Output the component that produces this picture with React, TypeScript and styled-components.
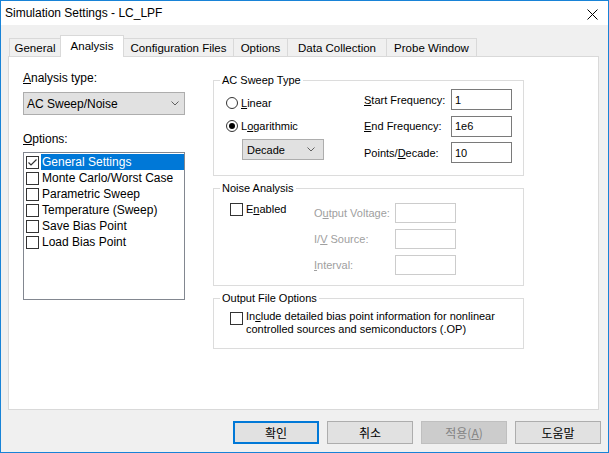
import React from "react";
import styled, { createGlobalStyle } from "styled-components";

const GlobalStyle = createGlobalStyle`
  html, body {
    margin: 0;
    padding: 0;
    background: #ffffff;
  }
  * {
    box-sizing: border-box;
  }
`;

const uiFont = `"Liberation Sans", Arial, sans-serif`;
const krFont = `"Noto Sans CJK KR", "Liberation Sans", sans-serif`;

const tabs = [
  { label: "General", width: 52 },
  { label: "Analysis", width: 64, active: true },
  { label: "Configuration Files", width: 111 },
  { label: "Options", width: 55 },
  { label: "Data Collection", width: 100 },
  { label: "Probe Window", width: 91 },
];

const optionItems = [
  { label: "General Settings", checked: true, selected: true },
  { label: "Monte Carlo/Worst Case" },
  { label: "Parametric Sweep" },
  { label: "Temperature (Sweep)" },
  { label: "Save Bias Point" },
  { label: "Load Bias Point" },
];

const Chevron = () => (
  <svg width="8" height="5" viewBox="0 0 8 5">
    <polyline points="0.5,0.5 4,4 7.5,0.5" fill="none" stroke="#606060" strokeWidth="1" />
  </svg>
);

const CheckBox: React.FC<{ checked?: boolean }> = ({ checked }) => (
  <Box>
    {checked && (
      <svg width="11" height="11" viewBox="0 0 11 11">
        <polyline points="1.5,5.5 4,8 9.5,2.5" fill="none" stroke="#333" strokeWidth="1.2" />
      </svg>
    )}
  </Box>
);

export default function App() {
  return (
    <>
      <GlobalStyle />
      <Window>
        <TitleBar>
          <Title>Simulation Settings - LC_LPF</Title>
          <CloseButton>
            <svg width="11" height="11" viewBox="0 0 11 11">
              <path d="M0.5 0.5 L10.5 10.5 M10.5 0.5 L0.5 10.5" stroke="#000" strokeWidth="1" />
            </svg>
          </CloseButton>
        </TitleBar>

        <Body>
          <TabRow>
            {tabs.map((t) => (
              <Tab key={t.label} $width={t.width} $active={!!t.active}>
                {t.label}
              </Tab>
            ))}
          </TabRow>

          <Panel>
            <LeftCol>
              <FieldLabel>
                <u>A</u>nalysis type:
              </FieldLabel>
              <Select $width={162} $height={23} $size={12}>
                <span>AC Sweep/Noise</span>
                <Chevron />
              </Select>

              <FieldLabel style={{ marginTop: 17 }}>
                <u>O</u>ptions:
              </FieldLabel>
              <ListBox>
                {optionItems.map((item) => (
                  <ListRow key={item.label}>
                    <CheckBox checked={item.checked} />
                    <ListText $selected={!!item.selected}>{item.label}</ListText>
                  </ListRow>
                ))}
              </ListBox>
            </LeftCol>

            <RightCol>
              <GroupBox $height={102}>
                <Legend>AC Sweep Type</Legend>
                <SweepContent>
                  <SweepModes>
                    <RadioRow>
                      <Radio />
                      <span>
                        <u>L</u>inear
                      </span>
                    </RadioRow>
                    <RadioRow>
                      <Radio $checked />
                      <span>
                        L<u>o</u>garithmic
                      </span>
                    </RadioRow>
                    <Select $width={82} $height={21} $size={11} $indent={16}>
                      <span>Decade</span>
                      <Chevron />
                    </Select>
                  </SweepModes>
                  <FormGrid $label={87} $rowGap={5.5}>
                    <GridLabel>
                      <u>S</u>tart Frequency:
                    </GridLabel>
                    <TextInput $height={21}>1</TextInput>
                    <GridLabel>
                      <u>E</u>nd Frequency:
                    </GridLabel>
                    <TextInput $height={21}>1e6</TextInput>
                    <GridLabel>
                      Points/<u>D</u>ecade:
                    </GridLabel>
                    <TextInput $height={21}>10</TextInput>
                  </FormGrid>
                </SweepContent>
              </GroupBox>

              <GroupBox $height={104}>
                <Legend>Noise Analysis</Legend>
                <NoiseContent>
                  <EnabledRow>
                    <CheckBox />
                    <span>
                      E<u>n</u>abled
                    </span>
                  </EnabledRow>
                  <FormGrid $label={81} $rowGap={6}>
                    <GridLabel $disabled>
                      O<u>u</u>tput Voltage:
                    </GridLabel>
                    <TextInput $height={20} $disabled />
                    <GridLabel $disabled>
                      I/<u>V</u> Source:
                    </GridLabel>
                    <TextInput $height={20} $disabled />
                    <GridLabel $disabled>
                      <u>I</u>nterval:
                    </GridLabel>
                    <TextInput $height={20} $disabled />
                  </FormGrid>
                </NoiseContent>
              </GroupBox>

              <GroupBox $height={57}>
                <Legend>Output File Options</Legend>
                <OutputContent>
                  <CheckBox />
                  <OutputText>
                    In<u>c</u>lude detailed bias point information for nonlinear
                    <br />
                    controlled sources and semiconductors (.OP)
                  </OutputText>
                </OutputContent>
              </GroupBox>
            </RightCol>
          </Panel>

          <ButtonRow>
            <Button $variant="default">확인</Button>
            <Button>취소</Button>
            <Button $variant="disabled">
              적용(<u>A</u>)
            </Button>
            <Button>도움말</Button>
          </ButtonRow>
        </Body>
      </Window>
    </>
  );
}

const Window = styled.div`
  width: 609px;
  height: 453px;
  border: 1px solid #1883d7;
  background: #f0f0f0;
  display: flex;
  flex-direction: column;
  font-family: ${uiFont};
  color: #000;
`;

const TitleBar = styled.div`
  height: 24px;
  flex-shrink: 0;
  background: #ffffff;
  display: flex;
  align-items: center;
  justify-content: space-between;
  padding-left: 4px;
`;

const Title = styled.span`
  font-size: 12px;
  line-height: 15px;
`;

const CloseButton = styled.div`
  width: 32px;
  height: 24px;
  display: flex;
  justify-content: center;
  align-items: flex-start;
  padding-top: 8px;
`;

const Body = styled.div`
  flex: 1;
  display: flex;
  flex-direction: column;
  padding: 10px 9px 0 7px;
`;

const TabRow = styled.div`
  display: flex;
  align-items: flex-end;
  padding-left: 1px;
  margin-bottom: -1px;
  position: relative;
  z-index: 1;
`;

const Tab = styled.div<{ $width: number; $active: boolean }>`
  width: ${(p) => p.$width}px;
  height: ${(p) => (p.$active ? 22 : 18)}px;
  margin-bottom: ${(p) => (p.$active ? 0 : 1)}px;
  margin-left: -1px;
  padding-bottom: ${(p) => (p.$active ? 2 : 0)}px;
  border: 1px solid #d9d9d9;
  border-bottom: none;
  background: ${(p) => (p.$active ? "#ffffff" : "#f0f0f0")};
  display: flex;
  align-items: center;
  justify-content: center;
  font-size: 11.5px;
  white-space: nowrap;

  &:first-child {
    margin-left: 0;
  }
`;

const Panel = styled.div`
  height: 354px;
  border: 1px solid #d9d9d9;
  background: #ffffff;
  display: flex;
  align-items: flex-start;
  gap: 28px;
  padding: 14px 0 0 14px;
`;

const LeftCol = styled.div`
  width: 162px;
  display: flex;
  flex-direction: column;
`;

const FieldLabel = styled.div`
  font-size: 12px;
  line-height: 15px;
`;

const Select = styled.div<{ $width: number; $height: number; $size: number; $indent?: number }>`
  width: ${(p) => p.$width}px;
  height: ${(p) => p.$height}px;
  margin-top: ${(p) => (p.$indent ? 0 : 6)}px;
  margin-left: ${(p) => p.$indent ?? 0}px;
  border: 1px solid #adadad;
  background: #e1e1e1;
  display: flex;
  align-items: center;
  justify-content: space-between;
  padding: 0 ${(p) => (p.$size > 11 ? 5 : 8)}px 0 ${(p) => (p.$size > 11 ? 3 : 4)}px;
  font-size: ${(p) => p.$size}px;
`;

const ListBox = styled.div`
  margin-top: 5px;
  height: 148px;
  border: 1px solid #828790;
  background: #ffffff;
  padding: 1px 0 0 2px;
`;

const ListRow = styled.div`
  height: 16px;
  display: flex;
  align-items: center;
`;

const Box = styled.div`
  width: 13px;
  height: 13px;
  flex-shrink: 0;
  border: 1px solid #333333;
  background: #ffffff;
  display: flex;
  align-items: center;
  justify-content: center;
`;

const ListText = styled.span<{ $selected: boolean }>`
  flex: 1;
  height: 16px;
  margin-left: 2px;
  padding-left: 1px;
  font-size: 12px;
  line-height: 16px;
  white-space: nowrap;
  background: ${(p) => (p.$selected ? "#0078d7" : "transparent")};
  color: ${(p) => (p.$selected ? "#ffffff" : "#000000")};
`;

const RightCol = styled.div`
  width: 311px;
  margin-top: 3px;
  display: flex;
  flex-direction: column;
  gap: 6px;
  font-size: 11px;
`;

const GroupBox = styled.fieldset<{ $height: number }>`
  margin: 0;
  padding: 0;
  min-width: 0;
  height: ${(p) => p.$height}px;
  border: 1px solid #dcdcdc;
`;

const Legend = styled.legend`
  margin-left: 6px;
  padding: 0 2px;
  font-size: 11px;
  line-height: 13px;
`;

const SweepContent = styled.div`
  display: flex;
  padding-left: 12px;
`;

const SweepModes = styled.div`
  width: 138px;
  display: flex;
  flex-direction: column;
  gap: 3px;
  padding-top: 6px;
`;

const RadioRow = styled.div`
  height: 20px;
  display: flex;
  align-items: center;
  gap: 3px;
`;

const Radio = styled.div<{ $checked?: boolean }>`
  width: 12px;
  height: 12px;
  border-radius: 50%;
  border: 1px solid #333333;
  background: #ffffff;
  display: flex;
  align-items: center;
  justify-content: center;

  &::after {
    content: "";
    width: 6px;
    height: 6px;
    border-radius: 50%;
    background: ${(p) => (p.$checked ? "#000000" : "transparent")};
  }
`;

const FormGrid = styled.div<{ $label: number; $rowGap: number }>`
  display: grid;
  grid-template-columns: ${(p) => p.$label}px 61px;
  row-gap: ${(p) => p.$rowGap}px;
  padding-top: 2px;
  align-items: center;
`;

const GridLabel = styled.span<{ $disabled?: boolean }>`
  white-space: nowrap;
  color: ${(p) => (p.$disabled ? "#a0a0a0" : "#000000")};
`;

const TextInput = styled.div<{ $height: number; $disabled?: boolean }>`
  height: ${(p) => p.$height}px;
  border: 1px solid ${(p) => (p.$disabled ? "#cccccc" : "#7a7a7a")};
  background: #ffffff;
  padding-left: 3px;
  display: flex;
  align-items: center;
`;

const NoiseContent = styled.div`
  display: flex;
  padding: 6px 0 0 16px;
`;

const EnabledRow = styled.div`
  width: 84px;
  display: flex;
  align-items: flex-start;
  gap: 3px;
  padding-top: 2px;
  line-height: 13px;
`;

const OutputContent = styled.div`
  display: flex;
  align-items: flex-start;
  padding: 7px 0 0 16px;
`;

const OutputText = styled.div`
  margin-left: 3px;
  margin-top: -2px;
  line-height: 13px;
  white-space: nowrap;
`;

const ButtonRow = styled.div`
  display: flex;
  justify-content: flex-end;
  gap: 8px;
  margin: 11px -2px 0 0;
`;

const Button = styled.div<{ $variant?: "default" | "disabled" }>`
  width: 86px;
  height: 23px;
  display: flex;
  align-items: center;
  justify-content: center;
  font-family: ${krFont};
  font-size: 12px;
  border: ${(p) => (p.$variant === "default" ? "2px solid #0078d7" : `1px solid ${p.$variant === "disabled" ? "#bfbfbf" : "#adadad"}`)};
  background: ${(p) => (p.$variant === "disabled" ? "#cccccc" : "#e1e1e1")};
  color: ${(p) => (p.$variant === "disabled" ? "#838383" : "#000000")};
`;
